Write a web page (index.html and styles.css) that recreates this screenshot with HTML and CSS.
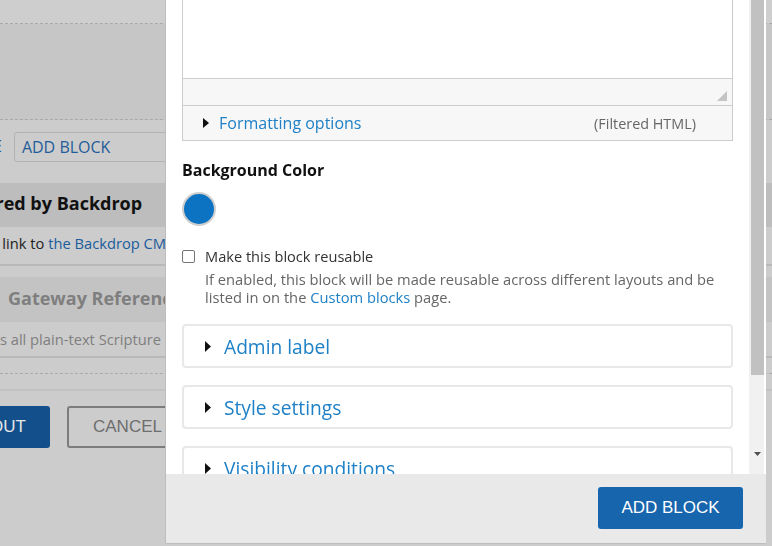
FILE: index.html
```
<!DOCTYPE html>
<html lang="en">
<head>
<meta charset="utf-8">
<title>Add block</title>
<link rel="stylesheet" href="styles.css">
</head>
<body>
<div class="page">
  <div class="lay-top"></div>
  <div class="lay-region"></div>
  <div class="lay-actions">
    <span class="frag">E</span>
    <span class="ghost-btn">ADD BLOCK</span>
  </div>
  <div class="block-head"><span class="clip-a">Powered by Backdrop</span></div>
  <div class="block-body"><span class="clip-b">Display a link to <a class="dim-link">the Backdrop CMS</a> website.</span></div>
  <div class="block-head two"><span class="clip-c">Gateway Reference</span></div>
  <div class="block-body two"><span class="clip-d">Converts all plain-text Scripture references into links.</span></div>
  <div class="lay-dash"></div>
  <div class="lay-line"></div>
  <div class="lay-buttons">
    <span class="save-btn"><span class="clip-e">SAVE LAYOUT</span></span>
    <span class="cancel-btn">CANCEL</span>
  </div>
</div>

<div class="dialog">
  <div class="dialog-body">
    <div class="dialog-content">
      <div class="editor">
        <div class="editor-text"></div>
        <div class="editor-grip">
          <svg class="grip" width="10" height="10" viewBox="0 0 10 10"><path d="M10 0L10 10L0 10Z" fill="#c4c4c4"/></svg>
        </div>
        <div class="editor-format">
          <svg class="tri" width="6" height="10" viewBox="0 0 6 10"><path d="M0 0L6 5L0 10Z" fill="#111"/></svg>
          <a class="link format-link">Formatting options</a>
          <span class="filter">(Filtered HTML)</span>
        </div>
      </div>

      <div class="field-label">Background Color</div>
      <div class="swatch"></div>

      <label class="check-row">
        <span class="checkbox"></span>
        <span class="check-label">Make this block reusable</span>
      </label>
      <div class="desc">If enabled, this block will be made reusable across different layouts and be listed in on the <a class="link">Custom blocks</a> page.</div>

      <div class="fs">
        <svg class="tri" width="6" height="11" viewBox="0 0 6 11"><path d="M0 0L6 5.5L0 11Z" fill="#111"/></svg>
        <a class="link fs-link">Admin label</a>
      </div>
      <div class="fs">
        <svg class="tri" width="6" height="11" viewBox="0 0 6 11"><path d="M0 0L6 5.5L0 11Z" fill="#111"/></svg>
        <a class="link fs-link">Style settings</a>
      </div>
      <div class="fs">
        <svg class="tri" width="6" height="11" viewBox="0 0 6 11"><path d="M0 0L6 5.5L0 11Z" fill="#111"/></svg>
        <a class="link fs-link">Visibility conditions</a>
      </div>
    </div>
    <div class="scrollbar">
      <div class="thumb"></div>
      <div class="arrow"><svg width="7" height="4" viewBox="0 0 7 4"><path d="M0 0L7 0L3.5 4Z" fill="#505050"/></svg></div>
    </div>
  </div>
  <div class="dialog-footer">
    <button class="primary">ADD BLOCK</button>
  </div>
</div>
</body>
</html>
```

FILE: styles.css
```
* { box-sizing: border-box; }
html, body { margin: 0; padding: 0; }
body {
  width: 772px;
  height: 546px;
  overflow: hidden;
  background: #cccccc;
  font-family: "Open Sans", "DejaVu Sans", sans-serif;
  color: #222;
}

/* background page (dimmed) */
.page {
  display: flex;
  flex-direction: column;
  width: 772px;
  overflow: hidden;
}
.lay-top {
  height: 24px;
  background: #cecece;
  border-bottom: 1px dashed #a9a9a9;
}
.lay-region {
  height: 96px;
  background: #c6c6c6;
  border-bottom: 1px dashed #a9a9a9;
}
.lay-actions {
  height: 63px;
  display: flex;
  align-items: flex-start;
  padding-top: 12px;
  white-space: nowrap;
}
.frag {
  margin-left: -7px;
  margin-right: 12px;
  margin-top: 3px;
  font-size: 16px;
  color: #1f5c99;
}
.ghost-btn {
  height: 30px;
  width: 180px;
  border: 1px solid #b2b2b2;
  border-radius: 3px;
  padding-left: 7px;
  line-height: 28px;
  font-size: 16px;
  color: #1f5c99;
}
.block-head {
  height: 44px;
  background: #bdbdbd;
  font-size: 18px;
  font-weight: 700;
  line-height: 40px;
  color: #111;
  white-space: nowrap;
}
.block-head.two {
  height: 45px;
  line-height: 42px;
  background: #c3c3c3;
  color: #7f7f7f;
  margin-top: 11px;
  padding-left: 8px;
}
.clip-a { margin-left: -53px; }
.block-body {
  height: 39px;
  padding-top: 5px;
  font-size: 14.7px;
  line-height: 22px;
  color: #222;
  border-bottom: 2px solid #b9b9b9;
  white-space: nowrap;
}
.block-body.two {
  height: 36px;
  padding-top: 6px;
  color: #7f7f7f;
}
.clip-b { margin-left: -63px; }
.clip-d { margin-left: -54px; }
.dim-link { color: #1a5c9c; }
.lay-dash {
  height: 16px;
  border-bottom: 1px dashed #ababab;
}
.lay-line {
  height: 17px;
  border-bottom: 2px solid #c2c2c2;
}
.lay-buttons {
  display: flex;
  gap: 17px;
  padding-top: 15px;
  white-space: nowrap;
}
.save-btn {
  width: 50px;
  height: 42px;
  background: #134f8b;
  border-radius: 0 3px 3px 0;
  color: #e6e6e6;
  font-family: "Liberation Sans", Arial, sans-serif;
  font-size: 17px;
  line-height: 42px;
  overflow: hidden;
  display: flex;
  justify-content: flex-end;
  padding-right: 24px;
}
.clip-e { flex-shrink: 0; }
.cancel-btn {
  width: 130px;
  height: 42px;
  border: 2px solid #7c7c7c;
  border-radius: 3px;
  color: #6e6e6e;
  font-family: "Liberation Sans", Arial, sans-serif;
  font-size: 17px;
  line-height: 38px;
  padding-left: 24px;
}

/* dialog */
.dialog {
  position: fixed;
  left: 166px;
  top: 0;
  width: 600px;
  height: 543px;
  background: #fff;
  display: flex;
  flex-direction: column;
  box-shadow: -1px 0 0 #bdbdbd, 0 1px 0 #bdbdbd;
}
.dialog-body {
  height: 474px;
  display: flex;
  overflow: hidden;
}
.dialog-content {
  flex: 1;
  padding: 0 16px;
  overflow: hidden;
}
.scrollbar {
  width: 15px;
  margin-right: 2px;
  background: #f1f1f1;
  display: flex;
  flex-direction: column;
  justify-content: space-between;
}
.thumb {
  height: 375px;
  margin-left: 2px;
  background: #c1c1c1;
}
.arrow {
  height: 22px;
  display: flex;
  justify-content: center;
  align-items: flex-start;
  padding-left: 2px;
}

.editor {
  border: 1px solid #cccccc;
  border-top: none;
}
.editor-text {
  height: 78px;
  background: #fff;
}
.editor-grip {
  height: 27px;
  border-top: 1px solid #cccccc;
  background: #f7f7f7;
  display: flex;
  justify-content: flex-end;
  align-items: flex-end;
  padding: 0 5px 4px 0;
}
.editor-format {
  height: 35px;
  border-top: 1px solid #cccccc;
  background: #f7f7f7;
  display: flex;
  align-items: center;
  padding: 0 36px 0 20px;
}
.tri { flex-shrink: 0; }
.link { color: #1e80c6; text-decoration: none; }
.format-link {
  margin-left: 10px;
  font-size: 16px;
}
.filter {
  margin-left: auto;
  font-size: 14.4px;
  color: #666;
}
.field-label {
  margin-top: 18px;
  font-size: 16px;
  font-weight: 700;
  line-height: 22px;
  color: #111;
}
.swatch {
  margin-top: 11px;
  width: 34px;
  height: 34px;
  border-radius: 50%;
  background: #0b73c1;
  border: 2px solid #cfcfcf;
}
.check-row {
  margin-top: 20px;
  display: flex;
  align-items: center;
  height: 20px;
  gap: 10px;
}
.checkbox {
  width: 13px;
  height: 13px;
  border: 1px solid #767676;
  border-radius: 2px;
  background: #fff;
}
.check-label {
  font-size: 14.6px;
  color: #333;
}
.desc {
  margin-top: 4px;
  padding-left: 23px;
  padding-right: 10px;
  font-size: 14.7px;
  line-height: 18px;
  color: #666;
}
.fs {
  margin-top: 18px;
  height: 44px;
  border: 2px solid #e8e8e8;
  border-radius: 4px;
  display: flex;
  align-items: center;
  padding-left: 21px;
}
.fs + .fs { margin-top: 17px; }
.fs-link {
  margin-left: 13px;
  font-size: 19.2px;
}

.dialog-footer {
  flex: 1;
  background: #e9e9e9;
  display: flex;
  justify-content: flex-end;
  padding: 13px 23px 0 0;
}
.primary {
  width: 145px;
  height: 42px;
  border: none;
  border-radius: 3px;
  background: #1765ad;
  color: #fff;
  font-family: "Liberation Sans", Arial, sans-serif;
  font-size: 17px;
  padding: 0;
}
```
